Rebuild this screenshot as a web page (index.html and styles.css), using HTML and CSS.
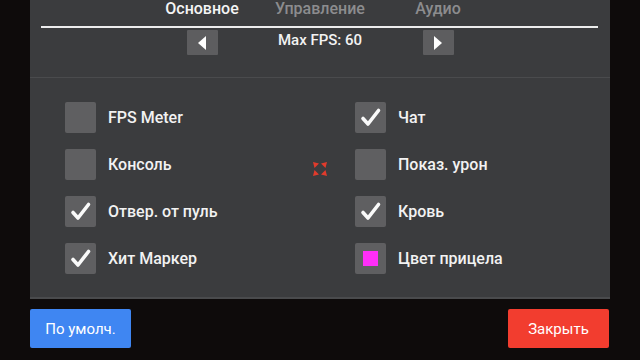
FILE: index.html
```html
<!DOCTYPE html>
<html lang="ru">
<head>
    <meta charset="UTF-8">
    <meta name="viewport" content="width=device-width, initial-scale=1.0">
    <title>Настройки</title>
    <link rel="stylesheet" href="styles.css">
</head>
<body>
    <!-- Settings Panel -->
    <div class="panel">
        <div class="panel-header">
            <div class="tabs">
                <span class="tab active">Основное</span>
                <span class="tab">Управление</span>
                <span class="tab">Аудио</span>
            </div>
            <div class="tab-line"></div>
            <div class="fps-row">
                <button class="arrow-btn" type="button">
                    <svg width="10" height="14" viewBox="0 0 10 14"><polygon points="9,0 9,14 1,7" fill="#fff"/></svg>
                </button>
                <span class="fps-value">Max FPS: 60</span>
                <button class="arrow-btn" type="button">
                    <svg width="10" height="14" viewBox="0 0 10 14"><polygon points="1,0 1,14 9,7" fill="#fff"/></svg>
                </button>
            </div>
        </div>

        <div class="options">
            <div class="option">
                <span class="box"></span>
                <span class="label">FPS Meter</span>
            </div>
            <div class="option">
                <span class="box checked"><svg viewBox="0 0 31 31"><path d="M8 16.5 L13 22 L23.5 8.5"/></svg></span>
                <span class="label">Чат</span>
            </div>
            <div class="option">
                <span class="box"></span>
                <span class="label">Консоль</span>
            </div>
            <div class="option">
                <span class="box"></span>
                <span class="label">Показ. урон</span>
            </div>
            <div class="option">
                <span class="box checked"><svg viewBox="0 0 31 31"><path d="M8 16.5 L13 22 L23.5 8.5"/></svg></span>
                <span class="label">Отвер. от пуль</span>
            </div>
            <div class="option">
                <span class="box checked"><svg viewBox="0 0 31 31"><path d="M8 16.5 L13 22 L23.5 8.5"/></svg></span>
                <span class="label">Кровь</span>
            </div>
            <div class="option">
                <span class="box checked"><svg viewBox="0 0 31 31"><path d="M8 16.5 L13 22 L23.5 8.5"/></svg></span>
                <span class="label">Хит Маркер</span>
            </div>
            <div class="option">
                <span class="box"><span class="swatch"></span></span>
                <span class="label">Цвет прицела</span>
            </div>

            <!-- crosshair overlay -->
            <svg class="crosshair" width="14" height="14" viewBox="0 0 14 14">
                <polygon points="0,0 6,1.5 1.5,6" fill="#e03b2c"/>
                <polygon points="14,0 8,1.5 12.5,6" fill="#e03b2c"/>
                <polygon points="0,14 6,12.5 1.5,8" fill="#e03b2c"/>
                <polygon points="14,14 8,12.5 12.5,8" fill="#e03b2c"/>
            </svg>
        </div>
    </div>

    <!-- Bottom Buttons -->
    <div class="actions">
        <button class="btn btn-default" type="button">По умолч.</button>
        <button class="btn btn-close" type="button">Закрыть</button>
    </div>
</body>
</html>
```

FILE: styles.css
```css
body {
    margin: 0;
    padding: 0;
    width: 640px;
    height: 360px;
    overflow: hidden;
    background-color: #0e0b0b;
    font-family: Roboto, "Noto Sans", Arial, sans-serif;
    color: #f2f2f2;
}

/* Panel */
.panel {
    margin: 0 30px;
    width: 580px;
    height: 297px;
    background-color: #3b3c3e;
    border-bottom: 2px solid #4a4b4d;
    display: flex;
    flex-direction: column;
}
.panel-header {
    height: 77px;
    border-bottom: 1px solid #4a4b4d;
}

/* Tabs */
.tabs {
    display: grid;
    grid-template-columns: 118px 118px 118px;
    justify-content: center;
    height: 26px;
}
.tab {
    text-align: center;
    font-size: 16px;
    font-weight: 500;
    line-height: 18px;
    color: #8c8c8e;
}
.tab.active {
    color: #f4f4f4;
}
.tab-line {
    height: 2px;
    margin: 0 12px 0 11px;
    background-color: #ececec;
}

/* FPS selector */
.fps-row {
    display: grid;
    grid-template-columns: 118px 118px 118px;
    justify-content: center;
    justify-items: center;
    align-items: start;
    padding-top: 2px;
}
.arrow-btn {
    width: 31px;
    height: 25px;
    padding: 0;
    border: none;
    border-radius: 1px;
    background-color: #5d5d5f;
    display: flex;
    align-items: center;
    justify-content: center;
}
.fps-value {
    font-size: 15px;
    font-weight: 500;
    line-height: 18px;
    padding-top: 1px;
}

/* Options */
.options {
    position: relative;
    display: grid;
    grid-template-columns: 1fr 1fr;
    row-gap: 16px;
    padding-top: 24px;
}
.option {
    display: flex;
    align-items: center;
    gap: 12px;
    padding-left: 35px;
}
.box {
    width: 31px;
    height: 31px;
    border-radius: 2px;
    background-color: #5f5f61;
    display: flex;
    align-items: center;
    justify-content: center;
}
.box svg {
    width: 31px;
    height: 31px;
}
.box path {
    fill: none;
    stroke: #fafafa;
    stroke-width: 3.6;
    stroke-linecap: round;
    stroke-linejoin: round;
}
.swatch {
    width: 15px;
    height: 15px;
    background-color: #ff2ef8;
}
.label {
    font-size: 16px;
    font-weight: 500;
}
.crosshair {
    position: absolute;
    left: 283px;
    top: 84px;
}

/* Bottom buttons */
.actions {
    display: flex;
    justify-content: space-between;
    margin: 10px 31px 0 30px;
}
.btn {
    width: 101px;
    height: 39px;
    border: none;
    border-radius: 2px;
    color: #fff;
    font-family: Roboto, "Noto Sans", Arial, sans-serif;
    font-size: 15px;
    cursor: pointer;
}
.btn-default {
    background-color: #3f86f2;
}
.btn-close {
    background-color: #f23d2f;
}
```
